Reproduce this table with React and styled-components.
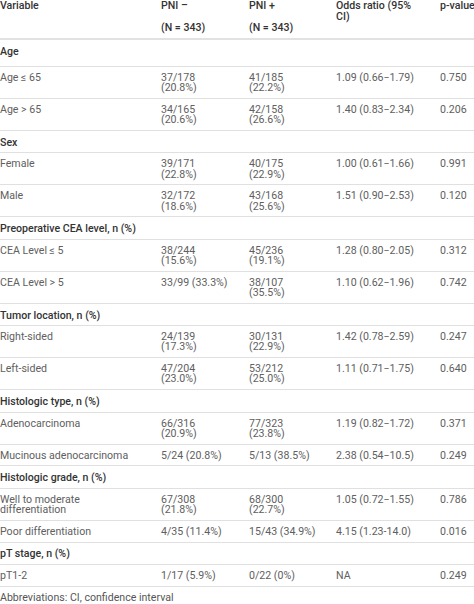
import React from 'react'
import styled, { createGlobalStyle } from 'styled-components'

const GlobalStyle = createGlobalStyle`
  html, body {
    margin: 0;
    padding: 0;
    background: #fff;
  }
  body {
    font-family: Roboto, "Noto Sans", "Liberation Sans", sans-serif;
    font-size: 10.6px;
    color: #606060;
    overflow: hidden;
  }
`

const Wrapper = styled.div`
  width: 474px;
  overflow: hidden;
`

const Table = styled.div`
  width: 520px;
`

const Row = styled.div`
  display: grid;
  grid-template-columns: 161px 88px 87px 104px 80px;
  border-bottom: ${p => (p.$head ? '2px solid #e2e2e2' : '1px solid #e0e0e0')};
  padding: ${p => (p.$head ? '0 0 5px' : '6px 0 4.6px')};
  line-height: ${p => (p.$head ? '11px' : '10.2px')};
`

const Cell = styled.div`
  padding-right: ${p => p.$pad || 18}px;
  color: ${p => (p.$head ? '#333' : '#606060')};
  font-weight: ${p => (p.$head ? 500 : 400)};
`

const SectionRow = styled.div`
  border-bottom: 1px solid #e0e0e0;
  padding: ${p => (p.$first ? '6px 0 9px' : '5.8px 0 4.6px')};
  line-height: 11px;
  color: #333;
  font-weight: 500;
`

const SubLine = styled.div`
  margin-top: 11px;
`

const Caption = styled.div`
  padding-top: 5px;
  color: #555;
  line-height: 11px;
`

const pads = [21, 18, 17, 19, 0]

const sections = [
  {
    title: 'Age',
    rows: [
      ['Age ≤ 65', '37/178 (20.8%)', '41/185 (22.2%)', '1.09 (0.66−1.79)', '0.750'],
      ['Age > 65', '34/165 (20.6%)', '42/158 (26.6%)', '1.40 (0.83−2.34)', '0.206'],
    ],
  },
  {
    title: 'Sex',
    rows: [
      ['Female', '39/171 (22.8%)', '40/175 (22.9%)', '1.00 (0.61−1.66)', '0.991'],
      ['Male', '32/172 (18.6%)', '43/168 (25.6%)', '1.51 (0.90−2.53)', '0.120'],
    ],
  },
  {
    title: 'Preoperative CEA level, n (%)',
    rows: [
      ['CEA Level ≤ 5', '38/244 (15.6%)', '45/236 (19.1%)', '1.28 (0.80−2.05)', '0.312'],
      ['CEA Level > 5', '33/99 (33.3%)', '38/107 (35.5%)', '1.10 (0.62−1.96)', '0.742'],
    ],
  },
  {
    title: 'Tumor location, n (%)',
    rows: [
      ['Right-sided', '24/139 (17.3%)', '30/131 (22.9%)', '1.42 (0.78−2.59)', '0.247'],
      ['Left-sided', '47/204 (23.0%)', '53/212 (25.0%)', '1.11 (0.71−1.75)', '0.640'],
    ],
  },
  {
    title: 'Histologic type, n (%)',
    rows: [
      ['Adenocarcinoma', '66/316 (20.9%)', '77/323 (23.8%)', '1.19 (0.82−1.72)', '0.371'],
      ['Mucinous adenocarcinoma', '5/24 (20.8%)', '5/13 (38.5%)', '2.38 (0.54−10.5)', '0.249'],
    ],
  },
  {
    title: 'Histologic grade, n (%)',
    rows: [
      ['Well to moderate differentiation', '67/308 (21.8%)', '68/300 (22.7%)', '1.05 (0.72−1.55)', '0.786'],
      ['Poor differentiation', '4/35 (11.4%)', '15/43 (34.9%)', '4.15 (1.23-14.0)', '0.016'],
    ],
  },
  {
    title: 'pT stage, n (%)',
    rows: [['pT1-2', '1/17 (5.9%)', '0/22 (0%)', 'NA', '0.249']],
  },
]

const App = () => {
  return (
    <Wrapper>
      <GlobalStyle />
      <Table>
        <Row $head>
          <Cell $head $pad={pads[0]}>Variable</Cell>
          <Cell $head $pad={pads[1]}>
            PNI –<SubLine>(N = 343)</SubLine>
          </Cell>
          <Cell $head $pad={pads[2]}>
            PNI +<SubLine>(N = 343)</SubLine>
          </Cell>
          <Cell $head $pad={pads[3]}>Odds ratio (95% CI)</Cell>
          <Cell $head $pad={pads[4]}>p-value</Cell>
        </Row>
        {sections.map((section, si) => (
          <React.Fragment key={section.title}>
            <SectionRow $first={si === 0}>{section.title}</SectionRow>
            {section.rows.map(row => (
              <Row key={row[0]}>
                {row.map((value, i) => (
                  <Cell key={i} $pad={pads[i]}>{value}</Cell>
                ))}
              </Row>
            ))}
          </React.Fragment>
        ))}
        <Caption>Abbreviations: CI, confidence interval</Caption>
      </Table>
    </Wrapper>
  )
}

export default App
